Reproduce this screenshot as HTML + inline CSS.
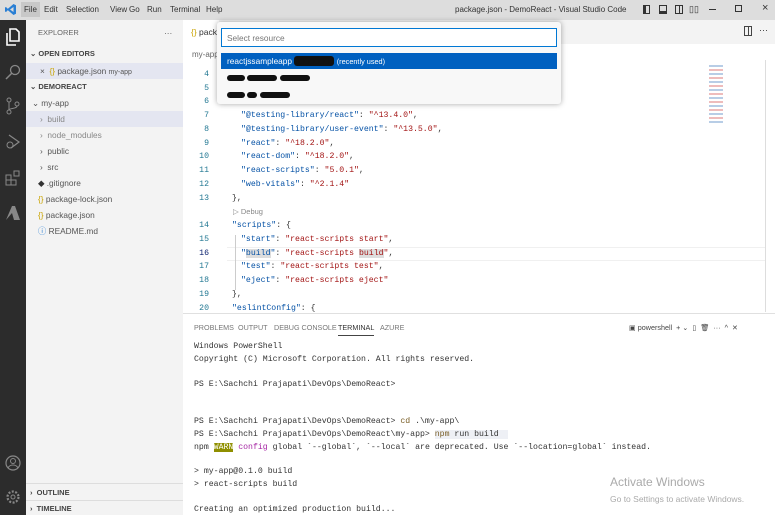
<!DOCTYPE html>
<html><head><meta charset="utf-8"><style>
*{margin:0;padding:0;box-sizing:border-box}
body{width:775px;height:515px;overflow:hidden;background:#fff;font-family:"Liberation Sans",sans-serif;font-size:8.5px;color:#333;position:relative}
.abs{position:absolute}
.mono{font-family:"Liberation Mono",monospace;font-size:8.2px;white-space:pre}
.title{left:0;top:0;width:775px;height:20px;background:#dddddd}
.menu span{position:absolute;top:5px;font-size:8px;color:#333}
.act{left:0;top:20px;width:26px;height:495px;background:#2c2c2c}
.side{left:26px;top:20px;width:157px;height:495px;background:#f3f3f3}
.si{position:absolute;left:0;width:157px;height:16px;line-height:16px;font-size:8.3px;color:#555;white-space:nowrap}
.tabs{left:183px;top:20px;width:592px;height:24px;background:#f3f3f3}
.code{left:183px;top:60px;width:592px;height:252px;background:#fff}
.ln{position:absolute;left:0;width:26px;text-align:right;color:#237893}
.cl{position:absolute;left:58px;color:#a31515}
.k{color:#0451a5}
.term{left:183px;top:313px;width:592px;height:202px;background:#fff;border-top:1px solid #e0e0e0}
.tt{position:absolute;top:9px;font-size:7.2px;color:#777}
.tl{position:absolute;left:11px;color:#333}
.qp{left:217px;top:22px;width:344px;height:82px;background:#f8f8f8;box-shadow:0 0 6px rgba(0,0,0,.35);border-radius:3px}
svg{position:absolute}
</style></head><body>
<div class="abs title"></div>
<svg style="left:4px;top:3px" width="13" height="13" viewBox="0 0 13 13"><path d="M9.5 1 L12 2.2 V10.8 L9.5 12 L3 6.5 Z M9.5 4 L6 6.5 L9.5 9 Z M1 4.5 L2 4 L4.5 6.5 L2 9 L1 8.5 Z" fill="#2a7fd4"/></svg>
<div class="menu"><span style="left:21px;top:2px;background:#c8c8c8;padding:3px 3px;">File</span><span style="left:44px">Edit</span><span style="left:66px">Selection</span><span style="left:110px">View</span><span style="left:129px">Go</span><span style="left:147px">Run</span><span style="left:170px">Terminal</span><span style="left:206px">Help</span><span style="left:455px">package.json - DemoReact - Visual Studio Code</span></div>
<div class="abs" style="left:643px;top:5px;width:7px;height:9px;border:1px solid #333;border-left:3px solid #333"></div>
<div class="abs" style="left:659px;top:5px;width:8px;height:9px;border:1px solid #333;border-bottom:3px solid #333"></div>
<div class="abs" style="left:675px;top:5px;width:8px;height:9px;border:1px solid #333"></div>
<div class="abs" style="left:679px;top:5px;width:1px;height:9px;background:#333"></div>
<div class="abs" style="left:689px;top:4px;font-size:9px">▯▯</div>
<div class="abs" style="left:709px;top:9px;width:7px;height:1px;background:#333"></div>
<div class="abs" style="left:735px;top:5px;width:7px;height:7px;border:1px solid #333"></div>
<div class="abs" style="left:762px;top:2px;font-size:11px;color:#333">×</div>

<div class="abs act"></div>
<svg style="left:5px;top:28px" width="16" height="18" viewBox="0 0 16 18"><path d="M5 1h6l3 3v9H5z M2 5v12h9" fill="none" stroke="#fff" stroke-width="1.6"/></svg>
<svg style="left:5px;top:64px" width="16" height="16"><circle cx="10" cy="6" r="4.5" fill="none" stroke="#888" stroke-width="1.3"/><path d="M7 9 L1 15" stroke="#888" stroke-width="1.5"/></svg>
<svg style="left:6px;top:97px" width="14" height="18"><circle cx="3" cy="3" r="2" fill="none" stroke="#888"/><circle cx="3" cy="15" r="2" fill="none" stroke="#888"/><circle cx="11" cy="7" r="2" fill="none" stroke="#888"/><path d="M3 5v8 M11 9c0 3-8 2-8 4" fill="none" stroke="#888"/></svg>
<svg style="left:5px;top:133px" width="16" height="18"><path d="M4 2 L14 9 L6 15" fill="none" stroke="#888" stroke-width="1.2"/><circle cx="5" cy="12" r="3" fill="none" stroke="#888"/></svg>
<svg style="left:5px;top:170px" width="16" height="16"><rect x="1" y="5" width="5" height="5" fill="none" stroke="#888"/><rect x="1" y="10" width="5" height="5" fill="none" stroke="#888"/><rect x="6" y="10" width="5" height="5" fill="none" stroke="#888"/><rect x="9" y="1" width="5" height="5" fill="none" stroke="#888"/></svg>
<svg style="left:5px;top:205px" width="16" height="16"><path d="M1 15 L7 1 L10 1 L15 15 L9 15 L7 8 Z" fill="#888"/></svg>
<svg style="left:5px;top:455px" width="16" height="16"><circle cx="8" cy="8" r="7" fill="none" stroke="#888" stroke-width="1.2"/><circle cx="8" cy="6" r="2.5" fill="none" stroke="#888"/><path d="M3 13c2-4 8-4 10 0" fill="none" stroke="#888"/></svg>
<svg style="left:5px;top:489px" width="16" height="16"><circle cx="8" cy="8" r="5.5" fill="none" stroke="#888" stroke-width="2.2" stroke-dasharray="2 1.5"/><circle cx="8" cy="8" r="2" fill="none" stroke="#888"/></svg>

<div class="abs side">
<div class="si" style="top:5px;left:12px;font-size:7.5px;color:#666">EXPLORER</div>
<div class="si" style="top:5px;left:138px;width:15px">···</div>
<div class="si" style="top:26px;left:4px;font-size:7.5px;font-weight:bold;color:#444">⌄ OPEN EDITORS</div>
<div class="si" style="top:43px;background:#e4e6f1;padding-left:14px">×&nbsp; <span style="color:#c9a300">{}</span> package.json <span style="font-size:7px">my-app</span></div>
<div class="si" style="top:59px;left:4px;font-size:7.5px;font-weight:bold;color:#444">⌄ DEMOREACT</div>
<div class="si" style="top:75px;padding-left:6px">⌄ my-app</div>
<div class="si" style="top:91px;background:#e4e6f1;padding-left:14px;color:#888">›&nbsp; build</div>
<div class="si" style="top:107px;padding-left:14px;color:#888">›&nbsp; node_modules</div>
<div class="si" style="top:123px;padding-left:14px">›&nbsp; public</div>
<div class="si" style="top:139px;padding-left:14px">›&nbsp; src</div>
<div class="si" style="top:155px;padding-left:12px"><span style="color:#333">◆</span> .gitignore</div>
<div class="si" style="top:171px;padding-left:12px"><span style="color:#c9a300">{}</span> package-lock.json</div>
<div class="si" style="top:187px;padding-left:12px"><span style="color:#c9a300">{}</span> package.json</div>
<div class="si" style="top:203px;padding-left:12px"><span style="color:#2a7fd4">ⓘ</span> README.md</div>
<div class="abs" style="left:0;top:463px;width:157px;height:1px;background:#ddd"></div>
<div class="si" style="top:465px;left:4px;font-size:7.5px;font-weight:bold;color:#444">›&nbsp; OUTLINE</div>
<div class="abs" style="left:0;top:480px;width:157px;height:1px;background:#ddd"></div>
<div class="si" style="top:481px;left:4px;font-size:7.5px;font-weight:bold;color:#444">›&nbsp; TIMELINE</div>
</div>

<div class="abs tabs"><div class="abs" style="left:0;top:0;width:36px;height:24px;background:#fff;padding:7px 0 0 8px;font-size:8.5px"><span style="color:#c9a300">{}</span> pack</div>
<div class="abs" style="left:561px;top:6px;width:8px;height:10px;border:1px solid #444"></div><div class="abs" style="left:565px;top:6px;width:1px;height:10px;background:#444"></div>
<div class="abs" style="left:576px;top:5px;font-size:9px">···</div></div>
<div class="abs" style="left:192px;top:50px;font-size:8px;color:#666">my-app</div>

<div class="abs code">
<div class="mono ln" style="top:10px">4</div>
<div class="mono ln" style="top:24px">5</div>
<div class="mono ln" style="top:37px">6</div>
<div class="mono ln" style="top:51px">7</div><div class="mono cl" style="top:51px"><span class="k">"@testing-library/react"</span><span style="color:#333">: </span>"^13.4.0"<span style="color:#333">,</span></div>
<div class="mono ln" style="top:65px">8</div><div class="mono cl" style="top:65px"><span class="k">"@testing-library/user-event"</span><span style="color:#333">: </span>"^13.5.0"<span style="color:#333">,</span></div>
<div class="mono ln" style="top:79px">9</div><div class="mono cl" style="top:79px"><span class="k">"react"</span><span style="color:#333">: </span>"^18.2.0"<span style="color:#333">,</span></div>
<div class="mono ln" style="top:92px">10</div><div class="mono cl" style="top:92px"><span class="k">"react-dom"</span><span style="color:#333">: </span>"^18.2.0"<span style="color:#333">,</span></div>
<div class="mono ln" style="top:106px">11</div><div class="mono cl" style="top:106px"><span class="k">"react-scripts"</span><span style="color:#333">: </span>"5.0.1"<span style="color:#333">,</span></div>
<div class="mono ln" style="top:120px">12</div><div class="mono cl" style="top:120px"><span class="k">"web-vitals"</span><span style="color:#333">: </span>"^2.1.4"</div>
<div class="mono ln" style="top:134px">13</div><div class="mono cl" style="top:134px;left:49px;color:#333">},</div>
<div class="abs" style="top:147px;left:50px;font-size:7.5px;color:#888">▷ Debug</div>
<div class="mono ln" style="top:161px">14</div><div class="mono cl" style="top:161px;left:49px"><span class="k">"scripts"</span><span style="color:#333">: {</span></div>
<div class="abs" style="left:44px;top:187px;width:538px;height:14px;border-top:1px solid #f0f0f0;border-bottom:1px solid #f0f0f0"></div>
<div class="mono ln" style="top:175px">15</div><div class="mono cl" style="top:175px"><span class="k">"start"</span><span style="color:#333">: </span>"react-scripts start"<span style="color:#333">,</span></div>
<div class="mono ln" style="top:189px;color:#0b216f">16</div><div class="mono cl" style="top:189px"><span class="k">"<span style="background:#ddd">build</span>"</span><span style="color:#333">: </span>"react-scripts <span style="background:#ddd">build</span>"<span style="color:#333">,</span></div>
<div class="mono ln" style="top:202px">17</div><div class="mono cl" style="top:202px"><span class="k">"test"</span><span style="color:#333">: </span>"react-scripts test"<span style="color:#333">,</span></div>
<div class="mono ln" style="top:216px">18</div><div class="mono cl" style="top:216px"><span class="k">"eject"</span><span style="color:#333">: </span>"react-scripts eject"</div>
<div class="mono ln" style="top:230px">19</div><div class="mono cl" style="top:230px;left:49px;color:#333">},</div>
<div class="mono ln" style="top:244px">20</div><div class="mono cl" style="top:244px;left:49px"><span class="k">"eslintConfig"</span><span style="color:#333">: {</span></div>
<div class="abs" style="left:52px;top:175px;width:1px;height:55px;background:#ccc"></div>
<div class="abs" style="left:526px;top:5px;width:14px;height:60px;background:repeating-linear-gradient(#9ab8dc 0 2px,#fff 2px 4px,#e6a0a0 4px 6px,#fff 6px 8px);opacity:.7"></div>
<div class="abs" style="left:582px;top:0;width:1px;height:252px;background:#ddd"></div>
</div>

<div class="abs term">
<span class="tt" style="left:11px">PROBLEMS</span><span class="tt" style="left:55px">OUTPUT</span><span class="tt" style="left:91px">DEBUG CONSOLE</span><span class="tt" style="left:155px;color:#333;border-bottom:1px solid #444;padding-bottom:3px">TERMINAL</span><span class="tt" style="left:197px">AZURE</span>
<span class="tt" style="left:446px;color:#444">▣ powershell &nbsp;+ ⌄ &nbsp;▯ &nbsp;🗑 &nbsp;··· &nbsp;^ &nbsp;✕</span>
<div class="mono tl" style="top:28px">Windows PowerShell</div>
<div class="mono tl" style="top:41px">Copyright (C) Microsoft Corporation. All rights reserved.</div>
<div class="mono tl" style="top:66px">PS E:\Sachchi Prajapati\DevOps\DemoReact&gt;</div>
<div class="mono tl" style="top:103px">PS E:\Sachchi Prajapati\DevOps\DemoReact&gt; <span style="color:#795e26">cd</span> .\my-app\</div>
<div class="mono tl" style="top:116px">PS E:\Sachchi Prajapati\DevOps\DemoReact\my-app&gt; <span style="background:#eef0f5"><span style="color:#795e26">npm</span> run build  </span></div>
<div class="mono tl" style="top:129px">npm <span style="background:#8f8f00;color:#fff">WARN</span> <span style="color:#a626a4">config</span> global `--global`, `--local` are deprecated. Use `--location=global` instead.</div>
<div class="mono tl" style="top:153px">&gt; my-app@0.1.0 build</div>
<div class="mono tl" style="top:166px">&gt; react-scripts build</div>
<div class="mono tl" style="top:191px">Creating an optimized production build...</div>
<div class="abs" style="left:427px;top:161px;font-size:12px;color:#aaa">Activate Windows</div>
<div class="abs" style="left:427px;top:180px;font-size:8.5px;color:#aaa">Go to Settings to activate Windows.</div>
</div>

<div class="abs qp">
<div class="abs" style="left:4px;top:6px;width:336px;height:19px;background:#fff;border:1px solid #0078d4;padding:4px 5px;font-size:8.3px;color:#777">Select resource</div>
<div class="abs" style="left:4px;top:31px;width:336px;height:16px;background:#0060c0;color:#fff;padding:3px 6px;font-size:8.3px">reactjssampleapp <span style="background:#111;border-radius:3px;color:#111">■■■■■■■■</span> <span style="font-size:7.3px">(recently used)</span></div>
<div class="abs" style="left:10px;top:51px;width:90px;height:7px;"><span style="display:inline-block;width:18px;height:6px;background:#111;border-radius:3px"></span> <span style="display:inline-block;width:30px;height:6px;background:#111;border-radius:3px"></span> <span style="display:inline-block;width:30px;height:6px;background:#111;border-radius:3px"></span></div>
<div class="abs" style="left:10px;top:68px;width:90px;height:7px;"><span style="display:inline-block;width:18px;height:6px;background:#111;border-radius:3px"></span> <span style="display:inline-block;width:10px;height:6px;background:#111;border-radius:3px"></span> <span style="display:inline-block;width:30px;height:6px;background:#111;border-radius:3px"></span></div>
</div>
</body></html>
